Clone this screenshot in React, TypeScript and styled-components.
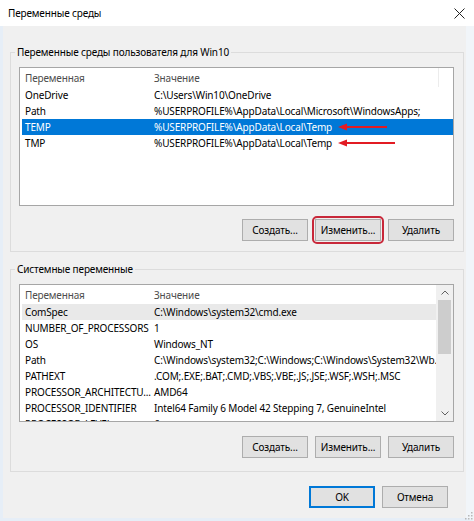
import React from "react";
import styled, { createGlobalStyle } from "styled-components";

const GlobalStyle = createGlobalStyle`
  html, body { margin: 0; padding: 0; background: #fff; }
  body {
    font-family: "Noto Sans", "Open Sans", sans-serif;
    font-size: 10px;
    letter-spacing: -0.15px;
    color: #000;
  }
`;

const Window = styled.div`
  position: relative;
  width: 474px;
  height: 521px;
  display: flex;
  flex-direction: column;
  overflow: hidden;
  background: #fff;
`;

const TitleBar = styled.div`
  height: 26px;
  display: flex;
  align-items: center;
  justify-content: space-between;
  padding: 0 9px 0 8px;
  background: #fff;
`;

const Title = styled.span`
  font-size: 10px;
  line-height: 16px;
`;

const Body = styled.div`
  flex: 1;
  display: flex;
  flex-direction: column;
  background: #f0f0f0;
  border-left: 3px solid #e6eef7;
  border-right: 8px solid #f1f5f9;
  border-bottom: 3px solid #e6eef7;
  padding: 18px 2px 0 7px;
`;

const Group = styled.fieldset<{ $top?: number; $bottom?: number }>`
  margin: ${(p) => p.$top ?? 0}px 0 0 0;
  padding: 7px 9px ${(p) => p.$bottom ?? 10}px 8px;
  border: 1px solid #dcdcdc;
  min-width: 0;
`;

const Legend = styled.legend`
  margin-left: -4px;
  padding: 0 2px;
  line-height: 16px;
  font-size: 10px;
`;

const List = styled.div<{ $h: number }>`
  height: ${(p) => p.$h}px;
  box-sizing: border-box;
  border: 1px solid #a6a6a6;
  background: #fff;
  display: flex;
  overflow: hidden;
`;

const Rows = styled.div`
  flex: 1;
  min-width: 0;
  padding-left: 2px;
`;

const Row = styled.div<{ $state?: "sel" | "hover" }>`
  display: grid;
  grid-template-columns: 129px 288px;
  height: 16px;
  align-items: center;
  white-space: nowrap;
  background: ${(p) =>
    p.$state === "sel" ? "#0078d7" : p.$state === "hover" ? "#e9e9e9" : "transparent"};
  color: ${(p) => (p.$state === "sel" ? "#fff" : "#000")};
`;

const HeadRow = styled(Row)`
  height: 19px;
  color: #4d4d4d;
`;

const Cell = styled.span`
  display: flex;
  align-items: center;
  padding-left: 3px;
  overflow: hidden;
  line-height: 16px;
`;

const HeadCell = styled(Cell)<{ $divider?: boolean }>`
  height: 100%;
  border-right: ${(p) => (p.$divider ? "1px solid #ececec" : "none")};
`;

const Arrow = styled.svg`
  flex: none;
  margin-left: 6px;
`;

const ScrollBar = styled.div`
  width: 17px;
  flex: none;
  display: flex;
  flex-direction: column;
  align-items: center;
  background: #f0f0f0;
`;

const ScrollBtn = styled.div`
  height: 15px;
  width: 100%;
  display: flex;
  align-items: center;
  justify-content: center;
`;

const Track = styled.div`
  flex: 1;
  width: 100%;
  padding: 0 2px;
  box-sizing: border-box;
`;

const Thumb = styled.div`
  height: 54px;
  background: #cdcdcd;
`;

const ButtonRow = styled.div<{ $top: number; $right?: number }>`
  display: flex;
  justify-content: flex-end;
  gap: 7px;
  margin-top: ${(p) => p.$top}px;
  padding-right: ${(p) => p.$right ?? 0}px;
`;

const Button = styled.button<{ $primary?: boolean; $marked?: boolean }>`
  position: relative;
  width: 66px;
  height: 22px;
  padding: 0;
  font-family: inherit;
  font-size: 10px;
  letter-spacing: -0.15px;
  color: #000;
  background: #e1e1e1;
  border: 1px solid ${(p) => (p.$primary ? "#0078d7" : "#adadad")};
  box-shadow: ${(p) => (p.$primary ? "inset 0 0 0 1px #0078d7" : "none")};
  &::after {
    content: "";
    display: ${(p) => (p.$marked ? "block" : "none")};
    position: absolute;
    inset: -4px;
    border: 2px solid #c8283a;
    border-radius: 5px;
  }
`;

const Grip = styled.svg`
  position: absolute;
  right: 1px;
  bottom: 1px;
`;

type Item = { name: string; value: string; state?: "sel" | "hover"; arrow?: number };

const userVars: Item[] = [
  { name: "OneDrive", value: "C:\\Users\\Win10\\OneDrive" },
  { name: "Path", value: "%USERPROFILE%\\AppData\\Local\\Microsoft\\WindowsApps;" },
  { name: "TEMP", value: "%USERPROFILE%\\AppData\\Local\\Temp", state: "sel", arrow: 49 },
  { name: "TMP", value: "%USERPROFILE%\\AppData\\Local\\Temp", arrow: 57 },
];

const sysVars: Item[] = [
  { name: "ComSpec", value: "C:\\Windows\\system32\\cmd.exe", state: "hover" },
  { name: "NUMBER_OF_PROCESSORS", value: "1" },
  { name: "OS", value: "Windows_NT" },
  { name: "Path", value: "C:\\Windows\\system32;C:\\Windows;C:\\Windows\\System32\\Wb..." },
  { name: "PATHEXT", value: ".COM;.EXE;.BAT;.CMD;.VBS;.VBE;.JS;.JSE;.WSF;.WSH;.MSC" },
  { name: "PROCESSOR_ARCHITECTU...", value: "AMD64" },
  { name: "PROCESSOR_IDENTIFIER", value: "Intel64 Family 6 Model 42 Stepping 7, GenuineIntel" },
  { name: "PROCESSOR_LEVEL", value: "6" },
];

const RedArrow = ({ len }: { len: number }) => (
  <Arrow width={len} height={8} viewBox={`0 0 ${len} 8`}>
    <line x1={6} y1={4} x2={len} y2={4} stroke="#e21b23" strokeWidth={2} />
    <path d="M0 4 L9 0.5 L9 7.5 Z" fill="#e21b23" />
  </Arrow>
);

const VarList = ({ items, height, scroll }: { items: Item[]; height: number; scroll?: boolean }) => (
  <List $h={height}>
    <Rows>
      <HeadRow>
        <HeadCell>Переменная</HeadCell>
        <HeadCell $divider>Значение</HeadCell>
      </HeadRow>
      {items.map((it) => (
        <Row key={it.name} $state={it.state}>
          <Cell>{it.name}</Cell>
          <Cell>
            {it.value}
            {it.arrow && <RedArrow len={it.arrow} />}
          </Cell>
        </Row>
      ))}
    </Rows>
    {scroll && (
      <ScrollBar>
        <ScrollBtn>
          <svg width="8" height="5" viewBox="0 0 8 5">
            <path d="M0.5 4.5 L4 1 L7.5 4.5" fill="none" stroke="#606060" strokeWidth="1" />
          </svg>
        </ScrollBtn>
        <Track>
          <Thumb />
        </Track>
        <ScrollBtn>
          <svg width="8" height="5" viewBox="0 0 8 5">
            <path d="M0.5 0.5 L4 4 L7.5 0.5" fill="none" stroke="#606060" strokeWidth="1" />
          </svg>
        </ScrollBtn>
      </ScrollBar>
    )}
  </List>
);

export default function App() {
  return (
    <>
      <GlobalStyle />
      <Window>
        <TitleBar>
          <Title>Переменные среды</Title>
          <svg width="11" height="11" viewBox="0 0 11 11">
            <path d="M0.5 0.5 L10.5 10.5 M10.5 0.5 L0.5 10.5" stroke="#222" strokeWidth="1" />
          </svg>
        </TitleBar>
        <Body>
          <Group>
            <Legend>Переменные среды пользователя для Win10</Legend>
            <VarList items={userVars} height={139} />
            <ButtonRow $top={13}>
              <Button>Создать...</Button>
              <Button $marked>Изменить...</Button>
              <Button>Удалить</Button>
            </ButtonRow>
          </Group>
          <Group $top={9} $bottom={13}>
            <Legend>Системные переменные</Legend>
            <VarList items={sysVars} height={138} scroll />
            <ButtonRow $top={14}>
              <Button>Создать...</Button>
              <Button>Изменить...</Button>
              <Button>Удалить</Button>
            </ButtonRow>
          </Group>
          <ButtonRow $top={14} $right={16}>
            <Button $primary>OK</Button>
            <Button>Отмена</Button>
          </ButtonRow>
        </Body>
        <Grip width="8" height="8" viewBox="0 0 8 8">
          <g fill="#b8b8b8">
            <rect x="6" y="0" width="1.5" height="1.5" />
            <rect x="3" y="3" width="1.5" height="1.5" />
            <rect x="6" y="3" width="1.5" height="1.5" />
            <rect x="0" y="6" width="1.5" height="1.5" />
            <rect x="3" y="6" width="1.5" height="1.5" />
            <rect x="6" y="6" width="1.5" height="1.5" />
          </g>
        </Grip>
      </Window>
    </>
  );
}
